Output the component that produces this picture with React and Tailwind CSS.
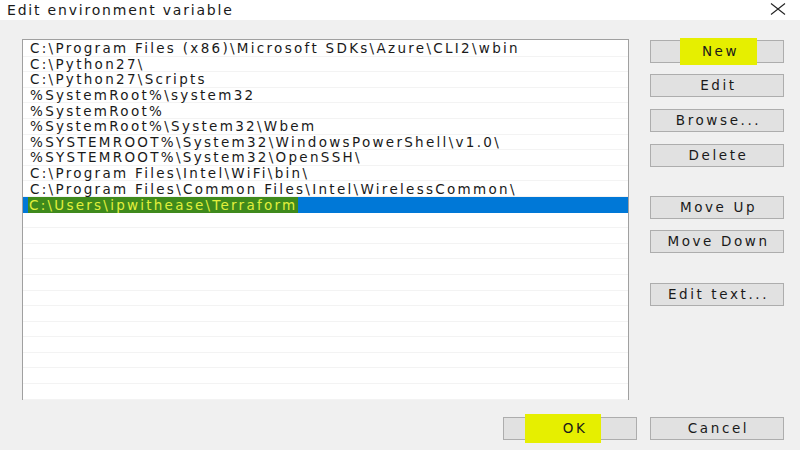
import React from "react";

const paths = [
  "C:\\Program Files (x86)\\Microsoft SDKs\\Azure\\CLI2\\wbin",
  "C:\\Python27\\",
  "C:\\Python27\\Scripts",
  "%SystemRoot%\\system32",
  "%SystemRoot%",
  "%SystemRoot%\\System32\\Wbem",
  "%SYSTEMROOT%\\System32\\WindowsPowerShell\\v1.0\\",
  "%SYSTEMROOT%\\System32\\OpenSSH\\",
  "C:\\Program Files\\Intel\\WiFi\\bin\\",
  "C:\\Program Files\\Common Files\\Intel\\WirelessCommon\\",
];

function Btn({ children, className = "", hl = false }) {
  return (
    <button className={"flex h-[23px] w-[134px] items-center justify-center border border-[#adadad] bg-[#e1e1e1] pl-[3px] text-[13.5px] tracking-[2.6px] text-[#1a1a1a] " + className}>
      {hl ? <span className="bg-[#e6ef00] py-[3px] pl-[22px] pr-[18px]">{children}</span> : children}
    </button>
  );
}

export default function App() {
  return (
    <div className="flex h-[450px] w-[800px] flex-col overflow-hidden bg-[#f0f0f0] font-['DejaVu_Sans',sans-serif] text-[#1a1a1a]">
      <div className="flex h-[20px] items-center justify-between bg-white pl-[7px] pr-[14px]">
        <span className="text-[14px] tracking-[1.8px]">Edit environment variable</span>
        <svg width="16" height="12" viewBox="0 0 16 12" className="mt-[-2px]">
          <path d="M1 0.5 L15 11.5 M15 0.5 L1 11.5" stroke="#222" strokeWidth="1.1" fill="none" />
        </svg>
      </div>

      <div className="flex pl-[22px] pt-[19px]">
        <div className="h-[361px] w-[607px] border border-[#a0a0a0] bg-white pt-px">
          {Array.from({ length: 23 }).map((_, i) => {
            const text = i < paths.length ? paths[i] : i === paths.length ? "SEL" : "";
            if (text === "SEL") {
              return (
                <div key={i} className="flex h-[15.6px] items-center bg-[#0078d7] pl-[5px]">
                  <span className="bg-[#3f8a1c] px-px text-[13.5px] leading-[16px] tracking-[2.25px] text-[#e2f03c]">
                    C:\Users\ipwithease\Terraform
                  </span>
                </div>
              );
            }
            return (
              <div key={i} className="flex h-[15.6px] items-center border-b border-[#f3f3f3] pl-[7px] text-[13.5px] tracking-[2.3px] whitespace-nowrap">
                {text}
              </div>
            );
          })}
        </div>

        <div className="ml-[21px] flex flex-col pt-px">
          <Btn hl>New</Btn>
          <Btn className="mt-[11px]">Edit</Btn>
          <Btn className="mt-[12px]">Browse...</Btn>
          <Btn className="mt-[12px]">Delete</Btn>
          <Btn className="mt-[29px]">Move Up</Btn>
          <Btn className="mt-[11px]">Move Down</Btn>
          <Btn className="mt-[30px]">Edit text...</Btn>
        </div>
      </div>

      <div className="mt-[17px] flex justify-end gap-[13px] pr-[16px]">
        <button className="flex h-[23px] w-[134px] items-center justify-center border border-[#adadad] bg-[#e1e1e1] text-[13.5px] tracking-[2.6px]">
          <span className="mr-[14px] bg-[#e6ef00] py-[4px] pl-[38px] pr-[14px]">OK</span>
        </button>
        <Btn>Cancel</Btn>
      </div>
    </div>
  );
}
